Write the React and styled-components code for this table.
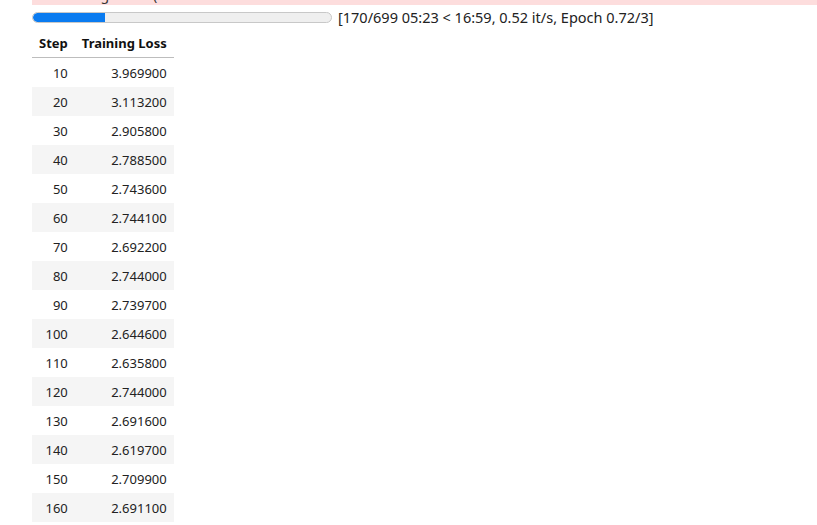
import React from "react";
import styled, { createGlobalStyle } from "styled-components";

const Global = createGlobalStyle`
  html, body { margin: 0; padding: 0; background: #ffffff; }
  body { font-family: "Noto Sans", "Open Sans", sans-serif; color: #222; }
`;

const Output = styled.div`
  padding-left: 32px;
`;

const Stderr = styled.div`
  height: 5px;
  background: #fddddd;
  overflow: hidden;
`;

const StderrText = styled.pre`
  margin: -14px 0 0 0;
  padding-left: 23px;
  font-family: "Noto Sans", sans-serif;
  font-size: 14px;
  line-height: 18px;
  color: #333;
`;

const ProgressRow = styled.div`
  display: flex;
  align-items: center;
  gap: 6px;
  height: 22px;
  margin-top: 1px;
`;

const Bar = styled.div`
  width: 298px;
  height: 9px;
  border: 1px solid #c8c8c8;
  background: #efefef;
  border-radius: 6px;
  overflow: hidden;
  flex: none;
`;

const Fill = styled.div`
  height: 100%;
  background: #0a7bf0;
  border-radius: 6px 0 0 6px;
`;

const ProgressText = styled.span`
  font-size: 14.5px;
  color: #222;
  white-space: nowrap;
`;

const Table = styled.table`
  border-collapse: collapse;
  border-spacing: 0;
  font-size: 13px;
`;

const Th = styled.th`
  font-weight: 700;
  color: #111;
  text-align: right;
  padding: 0 7px;
  height: 29px;
  border-bottom: 1px solid #bdbdbd;
  vertical-align: middle;
  white-space: nowrap;
`;

const Tr = styled.tr`
  background: ${(p) => (p.$shaded ? "#f5f5f5" : "#ffffff")};
`;

const Td = styled.td`
  text-align: right;
  padding: 0 7px;
  height: 29px;
  color: #222;
  vertical-align: middle;
`;

const rows = [
  [10, "3.969900"],
  [20, "3.113200"],
  [30, "2.905800"],
  [40, "2.788500"],
  [50, "2.743600"],
  [60, "2.744100"],
  [70, "2.692200"],
  [80, "2.744000"],
  [90, "2.739700"],
  [100, "2.644600"],
  [110, "2.635800"],
  [120, "2.744000"],
  [130, "2.691600"],
  [140, "2.619700"],
  [150, "2.709900"],
  [160, "2.691100"],
];

export default function App() {
  const pct = (170 / 699) * 100;
  return (
    <>
      <Global />
      <Output>
        <Stderr>
          <StderrText>warnings.warn(</StderrText>
        </Stderr>
        <ProgressRow>
          <Bar>
            <Fill style={{ width: `${pct}%` }} />
          </Bar>
          <ProgressText>[170/699 05:23 &lt; 16:59, 0.52 it/s, Epoch 0.72/3]</ProgressText>
        </ProgressRow>
        <Table>
          <thead>
            <tr>
              <Th>Step</Th>
              <Th>Training Loss</Th>
            </tr>
          </thead>
          <tbody>
            {rows.map(([s, l], i) => (
              <Tr key={s} $shaded={i % 2 === 1}>
                <Td>{s}</Td>
                <Td>{l}</Td>
              </Tr>
            ))}
          </tbody>
        </Table>
      </Output>
    </>
  );
}
